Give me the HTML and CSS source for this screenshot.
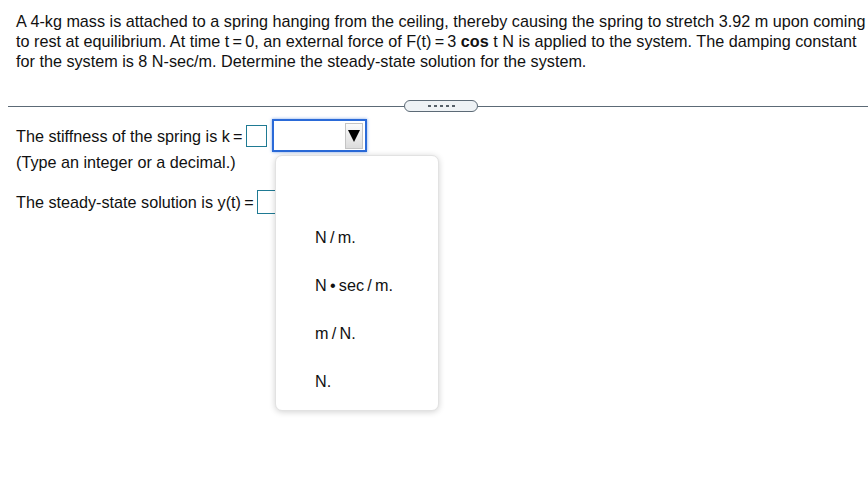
FILE: index.html
```html
<!DOCTYPE html>
<html lang="en">

<head>
    <meta charset="UTF-8">
    <title>Spring problem</title>
    <link rel="stylesheet" href="styles.css">
</head>

<body>
    <div class="page">
        <p class="prompt">
            A 4-kg mass is attached to a spring hanging from the ceiling, thereby causing the spring to stretch 3.92 m upon coming<br />
            to rest at equilibrium. At time t&thinsp;=&thinsp;0, an external force of F(t)&thinsp;=&thinsp;3 <b>cos</b> t N is applied to the system. The damping constant<br />
            for the system is 8 N-sec/m. Determine the steady-state solution for the system.
        </p>

        <div class="divider">
            <span class="rule rule-left"></span>
            <span class="pill"><i></i><i></i><i></i><i></i><i></i></span>
            <span class="rule"></span>
        </div>

        <div class="answer">
            <div class="row">
                <span>The stiffness of the spring is k&thinsp;=</span>
                <span class="box"></span>
                <span class="select"><span class="arrow"></span></span>
            </div>
            <div class="hint">(Type an integer or a decimal.)</div>
            <div class="row row-second">
                <span>The steady-state solution is y(t)&thinsp;=</span>
                <span class="box box-tall"></span>
            </div>
        </div>

        <ul class="menu">
            <li>N&thinsp;/&thinsp;m.</li>
            <li>N&thinsp;&bull;&thinsp;sec&thinsp;/&thinsp;m.</li>
            <li>m&thinsp;/&thinsp;N.</li>
            <li>N.</li>
        </ul>
    </div>
</body>

</html>
```

FILE: styles.css
```css
:root {
    --text: #111;
    --rule: #5c6a76;
    --pill-bg: #eef2f5;
    --box-border: #1f7a93;
    --focus: #2a6ad8;
}

html,
body {
    margin: 0;
    padding: 0;
    background: #ffffff;
    color: var(--text);
    font-family: "Liberation Sans", Arial, sans-serif;
    font-size: 16.2px;
    overflow: hidden;
}

.page {
    position: relative;
    width: 868px;
    height: 489px;
}

.prompt {
    margin: 0;
    padding: 11px 0 0 16px;
    line-height: 20px;
    white-space: nowrap;
}

.prompt b {
    font-weight: bold;
}

.divider {
    display: flex;
    align-items: center;
    margin: 29px 0 0 8px;
    height: 12px;
}

.rule {
    flex: 1;
    height: 1px;
    background: var(--rule);
}

.rule-left {
    flex: none;
    width: 396px;
}

.pill {
    display: flex;
    justify-content: center;
    align-items: center;
    gap: 3px;
    width: 72px;
    height: 10px;
    border: 1px solid var(--rule);
    border-radius: 6px;
    background: var(--pill-bg);
}

.pill i {
    display: block;
    width: 3px;
    height: 2px;
    background: #555f68;
}

.answer {
    padding: 7px 0 0 16px;
}

.row {
    display: flex;
    align-items: center;
    height: 33px;
    line-height: 20px;
}

.box {
    display: block;
    width: 19px;
    height: 20px;
    margin-left: 3px;
    border: 1px solid var(--box-border);
}

.box-tall {
    height: 22px;
}

.select {
    display: flex;
    justify-content: flex-end;
    align-items: center;
    box-sizing: border-box;
    width: 95px;
    height: 33px;
    margin-left: 5px;
    padding-right: 2px;
    border: 2px solid var(--focus);
    box-shadow: 0 0 3px rgba(42, 106, 216, 0.6);
}

.arrow {
    display: flex;
    justify-content: center;
    align-items: center;
    box-sizing: border-box;
    width: 18px;
    height: 26px;
    border: 1px solid #c4c4c4;
    background: linear-gradient(#fbfbfb, #dcdcdc);
}

.arrow:after {
    content: "";
    display: block;
    width: 0;
    height: 0;
    border-left: 6px solid transparent;
    border-right: 6px solid transparent;
    border-top: 12px solid #000;
}

.hint {
    line-height: 20px;
}

.row-second {
    margin-top: 14px;
    height: 32px;
}

/* dropdown list that hangs over the answer rows */
.menu {
    position: absolute;
    left: 275px;
    top: 155px;
    box-sizing: border-box;
    width: 164px;
    height: 256px;
    margin: 0;
    padding: 57px 0 0 39px;
    list-style: none;
    background: #fff;
    border: 1px solid #e2e2e2;
    border-radius: 7px;
    box-shadow: 0 1px 6px rgba(0, 0, 0, 0.18);
}

.menu li {
    height: 48px;
    line-height: 48px;
}
```
